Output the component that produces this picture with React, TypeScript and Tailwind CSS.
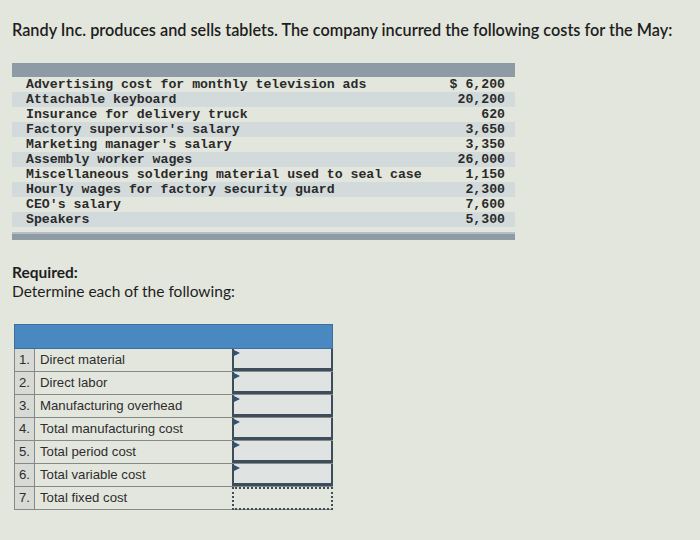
import React from 'react';

const costs: [string, string][] = [
  ['Advertising cost for monthly television ads', '$ 6,200'],
  ['Attachable keyboard', '20,200'],
  ['Insurance for delivery truck', '620'],
  ["Factory supervisor's salary", '3,650'],
  ["Marketing manager's salary", '3,350'],
  ['Assembly worker wages', '26,000'],
  ['Miscellaneous soldering material used to seal case', '1,150'],
  ['Hourly wages for factory security guard', '2,300'],
  ["CEO's salary", '7,600'],
  ['Speakers', '5,300'],
];

const items = [
  'Direct material',
  'Direct labor',
  'Manufacturing overhead',
  'Total manufacturing cost',
  'Total period cost',
  'Total variable cost',
  'Total fixed cost',
];

export default function App() {
  return (
    <div className="w-[700px] h-[540px] bg-[#e3e6dd] overflow-hidden font-['Lato','Open_Sans',sans-serif] text-[#1e1e1e]">
      {/* question */}
      <p className="pt-[19px] pl-[12px] text-[16.25px] leading-[22px] font-semibold">
        Randy Inc. produces and sells tablets. The company incurred the following costs for the May:
      </p>

      {/* cost data */}
      <div className="ml-[12px] mt-[22px] w-[503px] font-['Liberation_Mono',monospace] text-[13.2px] font-bold text-[#2a2a2a]">
        <div className="h-[14px] bg-[#8e9ba5]" />
        {costs.map(([label, amount], i) => (
          <div
            key={label}
            className={`h-[15px] leading-[15px] flex justify-between pl-[14px] pr-[10px] ${i % 2 === 1 ? 'bg-[#d2dadb]' : ''}`}
          >
            <span className="whitespace-pre">{label}</span>
            <span className="whitespace-pre">{amount}</span>
          </div>
        ))}
        <div className="mt-[5px] h-[8px] bg-[#8e9ba5] border-t-2 border-[#b4bec5]" />
      </div>

      {/* required */}
      <div className="mt-[23px] pl-[12px] text-[15.5px] leading-[19px]">
        <p className="font-bold">Required:</p>
        <p>Determine each of the following:</p>
      </div>

      {/* answer table */}
      <div className="ml-[14px] mt-[23px] w-[319px] font-['Liberation_Sans',Arial,sans-serif] text-[13.2px] text-[#2d2d2d]">
        <div className="h-[25px] bg-[#4a88c1] border border-[#3f6f99]" />
        {items.map((item, i) => {
          const last = i === items.length - 1;
          return (
            <div key={item} className="flex h-[23px] border-b border-[#858a86]">
              <div className="w-[21px] shrink-0 bg-[#d8dbd5] border-l border-r border-[#858a86] pl-[4px] leading-[22px]">
                {i + 1}.
              </div>
              <div className="w-[197px] shrink-0 pl-[5px] leading-[22px]">{item}</div>
              {last ? (
                <div className="flex-1 border-2 border-dotted border-[#3d4d5c] -mb-px" />
              ) : (
                <div className="relative flex-1 bg-[#dfe4e2] border-l-2 border-r-2 border-b-[3px] border-[#3d4d5c]">
                  <span className="absolute left-0 top-[1px] w-0 h-0 border-y-[3px] border-y-transparent border-l-[6px] border-l-[#2f5377]" />
                </div>
              )}
            </div>
          );
        })}
      </div>
    </div>
  );
}
